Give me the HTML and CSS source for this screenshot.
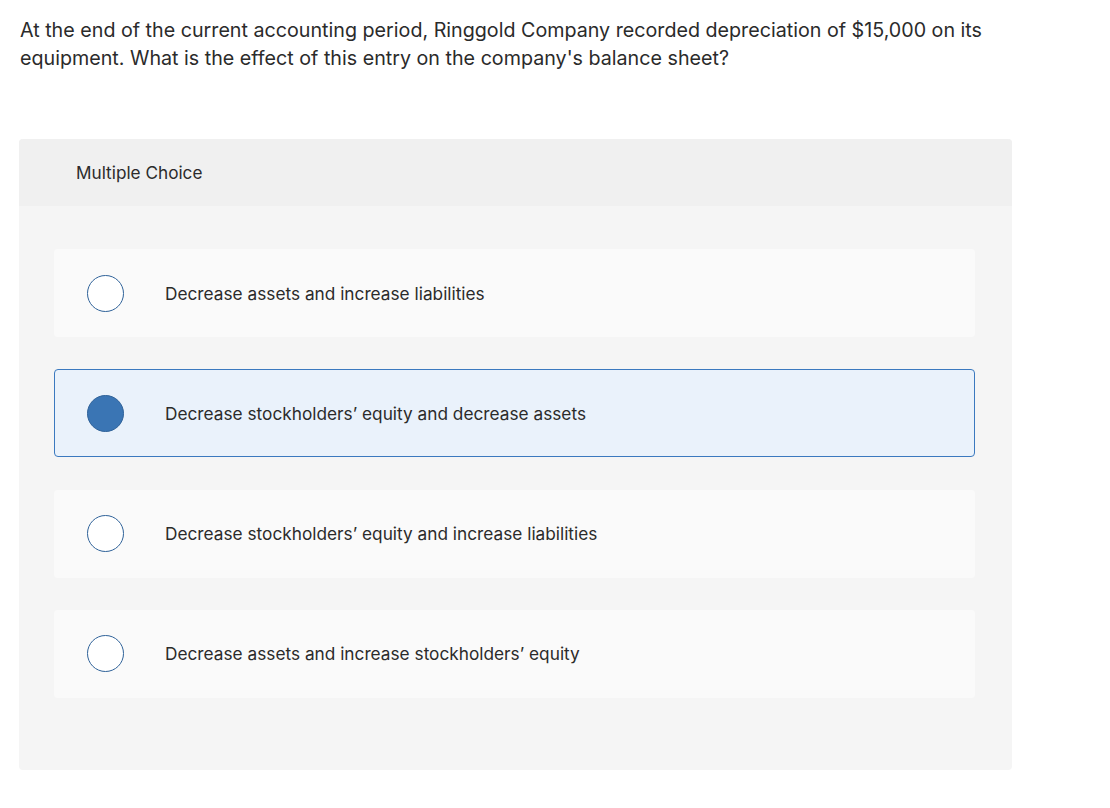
FILE: index.html
```html
<!DOCTYPE html>
<html lang="en">
<head>
<meta charset="utf-8">
<title>Multiple Choice</title>
<link rel="stylesheet" href="styles.css">
</head>
<body>
<p class="question">At the end of the current accounting period, Ringgold Company recorded depreciation of $15,000 on its equipment. What is the effect of this entry on the company's balance sheet?</p>
<section class="panel">
  <header class="panel-head">Multiple Choice</header>
  <div class="options">
    <label class="option"><span class="radio"></span><span class="opt-text">Decrease assets and increase liabilities</span></label>
    <label class="option selected"><span class="radio"></span><span class="opt-text">Decrease stockholders’ equity and decrease assets</span></label>
    <label class="option"><span class="radio"></span><span class="opt-text">Decrease stockholders’ equity and increase liabilities</span></label>
    <label class="option"><span class="radio"></span><span class="opt-text">Decrease assets and increase stockholders’ equity</span></label>
  </div>
</section>
</body>
</html>
```

FILE: styles.css
```css
html, body {
  margin: 0;
  padding: 0;
  background: #ffffff;
}
body {
  font-family: "Inter", "Lato", sans-serif;
  color: #2b2b2b;
  padding: 16px 0 0 19px;
  width: 993px;
}
.question {
  margin: 0 0 67px 1px;
  font-size: 19.7px;
  line-height: 28px;
  width: 990px;
}
.panel {
  background: #f5f5f5;
  border-radius: 4px;
  overflow: hidden;
}
.panel-head {
  background: #f0f0f0;
  height: 67px;
  display: flex;
  align-items: center;
  padding-left: 57px;
  font-size: 17.2px;
}
.options {
  display: flex;
  flex-direction: column;
  gap: 32.33px;
  padding: 43px 37px 72px 35px;
}
.option {
  display: flex;
  align-items: center;
  height: 88px;
  box-sizing: border-box;
  background: #fafafa;
  border: 1px solid transparent;
  border-radius: 4px;
  padding-left: 32px;
  font-size: 17.25px;
}
.option.selected {
  background: #eaf2fb;
  border-color: #3b79bf;
}
.radio {
  width: 37px;
  height: 37px;
  box-sizing: border-box;
  border-radius: 50%;
  border: 1px solid #2f6299;
  background: #ffffff;
  flex: none;
  margin-right: 41px;
}
.selected .radio {
  background: #3a75b4;
  border-color: #2f6299;
}
```
